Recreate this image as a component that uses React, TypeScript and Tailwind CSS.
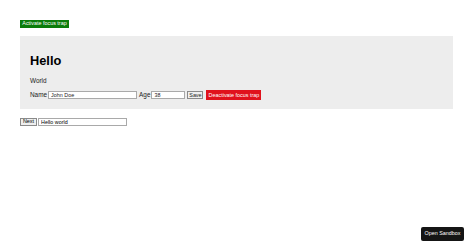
import React, { useState } from "react";

// Focus-trap demo page, drawn at the small scale of the reference.
export default function App() {
  const [name, setName] = useState("John Doe");
  const [age, setAge] = useState("38");
  const [note, setNote] = useState("Hello world");

  return (
    <div className="relative h-[248px] w-[474px] overflow-hidden bg-white font-['Liberation_Sans',Arial,sans-serif] text-black">
      <div className="pl-[20px] pr-[21px] pt-[20px]">
        <button
          type="button"
          className="block h-[8px] w-[49px] bg-[#0a7c0a] text-[5.4px] leading-none text-white"
        >
          Activate focus trap
        </button>

        {/* Trapped area */}
        <div className="mt-[8px] h-[73px] bg-[#ededed] pl-[10px] pt-[19px]">
          <h1 className="text-[12.8px] font-bold leading-none">Hello</h1>
          <p className="mt-[10px] text-[6.4px] leading-none text-[#222]">World</p>
          <div className="mt-[6px] flex items-center text-[6.4px] leading-none text-[#222]">
            <span className="mr-[1px]">Name</span>
            <input
              value={name}
              onChange={e => setName(e.target.value)}
              className="h-[8px] w-[89px] border border-[#a9a9a9] bg-white px-[2px] text-[5.4px] leading-none outline-none"
            />
            <span className="ml-[2px] mr-[1px]">Age</span>
            <input
              value={age}
              onChange={e => setAge(e.target.value)}
              className="h-[8px] w-[34px] border border-[#a9a9a9] bg-white px-[2px] text-[5.4px] leading-none outline-none"
            />
            <button
              type="button"
              className="ml-[2px] h-[8px] w-[16px] border border-[#8a8a8a] bg-[#efefef] text-[5.4px] leading-none"
            >
              Save
            </button>
            <button
              type="button"
              className="ml-[3px] h-[10px] w-[55px] bg-[#e0121c] text-[5.4px] leading-none text-white"
            >
              Deactivate focus trap
            </button>
          </div>
        </div>

        <div className="mt-[9px] flex items-center">
          <button
            type="button"
            className="h-[8px] w-[17px] border border-[#8a8a8a] bg-[#efefef] text-[5.4px] leading-none"
          >
            Next
          </button>
          <input
            value={note}
            onChange={e => setNote(e.target.value)}
            className="ml-[1px] h-[8px] w-[89px] border border-[#a9a9a9] bg-white px-[2px] text-[5.4px] leading-none outline-none"
          />
        </div>
      </div>

      <button
        type="button"
        className="absolute bottom-[7px] right-[10px] h-[14px] w-[43px] rounded-[2px] bg-[#151515] text-[5.4px] leading-none text-white"
      >
        Open Sandbox
      </button>
    </div>
  );
}
